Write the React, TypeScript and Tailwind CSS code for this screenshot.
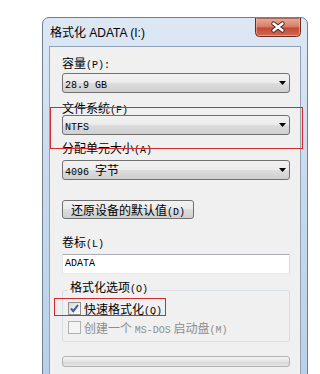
import type { ReactNode } from "react"

// ascii runs in the dialog use a narrower mono face, like SimSun's half-width glyphs
function A({ children }: { children: ReactNode }) {
    return <span className="font-['Liberation_Mono',monospace] text-[10px] leading-none">{children}</span>
}

function Label({ children, className }: { children: ReactNode; className: string }) {
    return <div className={"h-[14px] whitespace-nowrap " + className}>{children}</div>
}

function Combo({ children }: { children: ReactNode }) {
    return (
        <div className="flex h-[20px] items-center justify-between rounded-[3px] border border-[#707070] bg-[#e4e4e4] bg-[linear-gradient(#f2f2f2,#ebebeb_50%,#dddddd_50%,#cfcfcf)] pl-[2px] pr-[3px]">
            <span className="h-[14px] leading-[14px]">{children}</span>
            <svg width="7" height="4" viewBox="0 0 7 4">
                <path d="M0 0h7L3.5 4z" fill="#000" />
            </svg>
        </div>
    )
}

function CheckBox({ checked, disabled }: { checked?: boolean; disabled?: boolean }) {
    return (
        <div
            className={
                disabled
                    ? "h-[13px] w-[13px] shrink-0 border border-[#b1b1b1] bg-[#f4f4f4]"
                    : "h-[13px] w-[13px] shrink-0 border border-[#8e8f8f] bg-[#eeeeee] bg-[linear-gradient(135deg,#d8d8d8,#ffffff)]"
            }
        >
            {checked && (
                <svg width="11" height="11" viewBox="0 0 11 11">
                    <path d="M2 5.5l2.3 2.6L9 2" fill="none" stroke="#3b5a96" strokeWidth="2" />
                </svg>
            )}
        </div>
    )
}

function CloseButton() {
    return (
        <svg width="46" height="19" viewBox="0 0 46 19" className="block shrink-0">
            <defs>
                <linearGradient id="closeRed" x1="0" y1="0" x2="0" y2="1">
                    <stop offset="0" stopColor="#e9ab9b" />
                    <stop offset="0.45" stopColor="#d8806b" />
                    <stop offset="0.55" stopColor="#c44a33" />
                    <stop offset="1" stopColor="#d66a50" />
                </linearGradient>
            </defs>
            <path d="M0.5 0v14.5a4 4 0 0 0 4 4h37a4 4 0 0 0 4-4V0z" fill="url(#closeRed)" stroke="#6b2b22" />
            <path d="M1.5 0v14a3 3 0 0 0 3 3.5h37a3 3 0 0 0 3-3.5V0" fill="none" stroke="#f1b9aa" strokeOpacity="0.6" />
            <path d="M18.5 5.5l9 7M27.5 5.5l-9 7" stroke="#4a2a26" strokeWidth="4.4" strokeLinecap="round" />
            <path d="M18.5 5.5l9 7M27.5 5.5l-9 7" stroke="#ffffff" strokeWidth="2.4" strokeLinecap="round" />
        </svg>
    )
}

export default function App() {
    return (
        <div className="h-[374px] w-[320px] overflow-hidden bg-white pl-[42px] pt-[17px]">
            <div className="relative flex h-[400px] w-[266px] flex-col rounded-t-[7px] border border-[#6e8094] bg-[#c6d8ec] bg-[linear-gradient(#dde8f4,#c9daed_40%,#b8cee7)] px-[6px]">
                {/* title bar */}
                <div className="flex h-[28px] items-start justify-between">
                    <span className="mt-[7px] pl-[1px] font-['Liberation_Sans','Noto_Sans_CJK_SC',sans-serif] text-[12px] leading-[16px] text-black">
                        格式化 ADATA (I:)
                    </span>
                    <CloseButton />
                </div>

                {/* client area */}
                <div className="flex flex-1 flex-col border border-[#8fa2b7] bg-[#f0f0f0] pl-[12px] pr-[10px] font-['Noto_Sans_CJK_SC',sans-serif] text-[12px] leading-[14px] text-black">
                    <Label className="mt-[9px]">容量<A>(P):</A></Label>
                    <div className="mt-[3px]">
                        <Combo><A>28.9 GB</A></Combo>
                    </div>

                    <Label className="mt-[8px]">文件系统<A>(F)</A></Label>
                    <Combo><A>NTFS</A></Combo>

                    <Label className="mt-[6px]">分配单元大小<A>(A)</A></Label>
                    <div className="mt-[5px]">
                        <Combo><A>4096 </A>字节</Combo>
                    </div>

                    <div className="mt-[20px] flex h-[19px] w-[132px] items-center justify-center rounded-[3px] border border-[#707070] bg-[#e4e4e4] bg-[linear-gradient(#f2f2f2,#ebebeb_50%,#dddddd_50%,#cfcfcf)]">
                        <span className="h-[14px]">还原设备的默认值<A>(D)</A></span>
                    </div>

                    <Label className="mt-[16px]">卷标<A>(L)</A></Label>
                    <div className="mt-[5px] flex h-[20px] items-center border border-[#abadb3] border-b-[#e3e9ef] border-l-[#e2e3ea] border-r-[#dbdfe6] bg-white pl-[2px]">
                        <A>ADATA</A>
                    </div>

                    {/* options group */}
                    <div className="relative mt-[16px] rounded-[3px] border border-[#d5dfe5] pb-[7px] pl-[5px] pt-[11px]">
                        <span className="absolute -top-[11px] left-[5px] h-[14px] bg-[#f0f0f0] px-[2px]">
                            格式化选项<A>(O)</A>
                        </span>
                        <div className="flex h-[13px] items-center gap-[3px]">
                            <CheckBox checked />
                            <span className="h-[14px] whitespace-nowrap">快速格式化<A>(Q)</A></span>
                        </div>
                        <div className="mt-[6px] flex h-[13px] items-center gap-[3px] text-[#8d8d8d]">
                            <CheckBox disabled />
                            <span className="h-[14px] whitespace-nowrap">创建一个 <A>MS-DOS</A> 启动盘<A>(M)</A></span>
                        </div>
                    </div>

                    <div className="mt-[14px] h-[11px] rounded-[3px] border border-[#b2b2b2] bg-[#e2e2e2] bg-[linear-gradient(#f4f4f4,#e4e4e4_50%,#d6d6d6_55%,#e6e6e6)]"></div>
                </div>

                {/* red highlight boxes drawn over the dialog */}
                <div className="absolute left-[7px] top-[89px] h-[42px] w-[253px] border border-[#d42a2a]"></div>
                <div className="absolute left-[11px] top-[280px] h-[18px] w-[112px] border border-[#d42a2a]"></div>
            </div>
        </div>
    )
}
